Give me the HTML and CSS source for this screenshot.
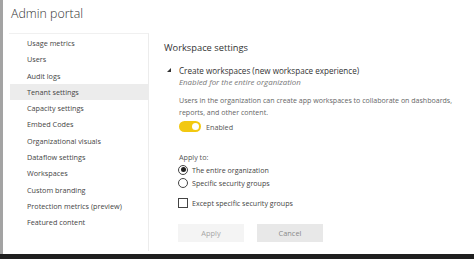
FILE: index.html
```html
<!DOCTYPE html>
<html>
<head>
<meta charset="utf-8">
<link rel="stylesheet" href="styles.css">
</head>
<body>
<div class="frame">
  <div class="main">
    <h1 class="title">Admin portal</h1>
    <div class="content">
      <nav class="sidebar">
        <div class="item">Usage metrics</div>
        <div class="item">Users</div>
        <div class="item">Audit logs</div>
        <div class="item active">Tenant settings</div>
        <div class="item">Capacity settings</div>
        <div class="item">Embed Codes</div>
        <div class="item">Organizational visuals</div>
        <div class="item">Dataflow settings</div>
        <div class="item">Workspaces</div>
        <div class="item">Custom branding</div>
        <div class="item">Protection metrics (preview)</div>
        <div class="item">Featured content</div>
      </nav>
      <section class="panel">
        <h2 class="heading">Workspace settings</h2>
        <div class="setting">
          <div class="setting-head">
            <span class="caret"></span>
            <span class="setting-title">Create workspaces (new workspace experience)</span>
          </div>
          <div class="setting-body">
            <div class="status">Enabled for the entire organization</div>
            <p class="desc">Users in the organization can create app workspaces to collaborate on dashboards, reports, and other content.</p>
            <div class="toggle-row">
              <span class="toggle"><span class="knob"></span></span>
              <span class="toggle-label">Enabled</span>
            </div>
            <div class="apply-label">Apply to:</div>
            <div class="option"><span class="radio checked"></span><span>The entire organization</span></div>
            <div class="option"><span class="radio"></span><span>Specific security groups</span></div>
            <div class="option check-opt"><span class="checkbox"></span><span>Except specific security groups</span></div>
            <div class="buttons">
              <span class="btn btn-apply">Apply</span>
              <span class="btn btn-cancel">Cancel</span>
            </div>
          </div>
        </div>
      </section>
    </div>
  </div>
  <div class="bottom"></div>
</div>
</body>
</html>
```

FILE: styles.css
```css
* { box-sizing: border-box; }
html, body { margin: 0; padding: 0; background: #fff; }
body {
  font-family: "Open Sans", "Noto Sans", sans-serif;
  color: #333;
  width: 474px;
  height: 259px;
  overflow: hidden;
}
.frame {
  display: flex;
  flex-direction: column;
  height: 259px;
}
.main {
  flex: 1;
  border-left: 3px solid #a3a3a3;
  display: flex;
  flex-direction: column;
  min-height: 0;
}
.bottom {
  height: 5px;
  background: #1f1f1f;
}
.title {
  margin: 3px 0 0 8px;
  font-size: 12.4px;
  font-weight: 300;
  line-height: 22px;
  color: #333;
  height: 30px;
}
.content {
  flex: 1;
  display: flex;
  min-height: 0;
}
.sidebar {
  width: 140px;
  margin-left: 6px;
  border-top: 1px solid #f0f0f0;
  border-right: 1px solid #ececec;
  padding-top: 1px;
  margin-bottom: 3px;
}
.item {
  height: 16.3px;
  line-height: 16.3px;
  padding-left: 18px;
  font-size: 7.25px;
  color: #444;
  white-space: nowrap;
}
.item.active {
  background: #ececec;
  margin-left: 1px;
  padding-left: 17px;
}
.panel {
  flex: 1;
  padding-left: 15px;
}
.heading {
  margin: 7px 0 0 0;
  font-size: 9.3px;
  font-weight: 400;
  line-height: 15px;
  color: #333;
}
.setting-head {
  display: flex;
  align-items: center;
  margin-top: 8px;
  height: 14px;
}
.caret {
  width: 0;
  height: 0;
  border-left: 4px solid transparent;
  border-bottom: 4px solid #333;
  margin-left: 3px;
  margin-right: 8px;
}
.setting-title {
  font-size: 8.1px;
  color: #333;
  white-space: nowrap;
}
.setting-body {
  padding-left: 15px;
}
.status {
  font-size: 7.9px;
  font-style: italic;
  color: #777;
  line-height: 10px;
}
.desc {
  margin: 7px 0 0 0;
  font-size: 7.05px;
  line-height: 12px;
  color: #666;
  width: 290px;
}
.toggle-row {
  display: flex;
  align-items: center;
  margin-top: 3px;
  height: 11px;
}
.toggle {
  width: 22px;
  height: 11px;
  border-radius: 6px;
  background: #f2c811;
  display: flex;
  justify-content: flex-end;
  align-items: center;
  padding-right: 2px;
}
.knob {
  width: 7px;
  height: 7px;
  border-radius: 50%;
  background: #fff;
}
.toggle-label {
  margin-left: 5px;
  font-size: 7.2px;
  color: #555;
}
.apply-label {
  margin-top: 19px;
  font-size: 7.2px;
  line-height: 12px;
  color: #555;
}
.option {
  display: flex;
  align-items: center;
  height: 13px;
  font-size: 7.1px;
  color: #444;
  margin-left: -1px;
}
.check-opt {
  margin-top: 7px;
}
.radio {
  width: 10px;
  height: 10px;
  border: 1px solid #444;
  border-radius: 50%;
  margin-right: 4px;
  display: flex;
  align-items: center;
  justify-content: center;
}
.radio.checked::after {
  content: "";
  width: 5px;
  height: 5px;
  border-radius: 50%;
  background: #222;
}
.checkbox {
  width: 10px;
  height: 10px;
  border: 1px solid #444;
  margin-right: 4px;
}
.buttons {
  display: flex;
  gap: 13px;
  margin-top: 15px;
  margin-left: -1px;
}
.btn {
  width: 66px;
  height: 18px;
  display: flex;
  align-items: center;
  justify-content: center;
  font-size: 7.4px;
}
.btn-apply {
  background: #f4f4f4;
  color: #a6a6a6;
}
.btn-cancel {
  background: #e8e8e8;
  color: #8a8a8a;
}
```
